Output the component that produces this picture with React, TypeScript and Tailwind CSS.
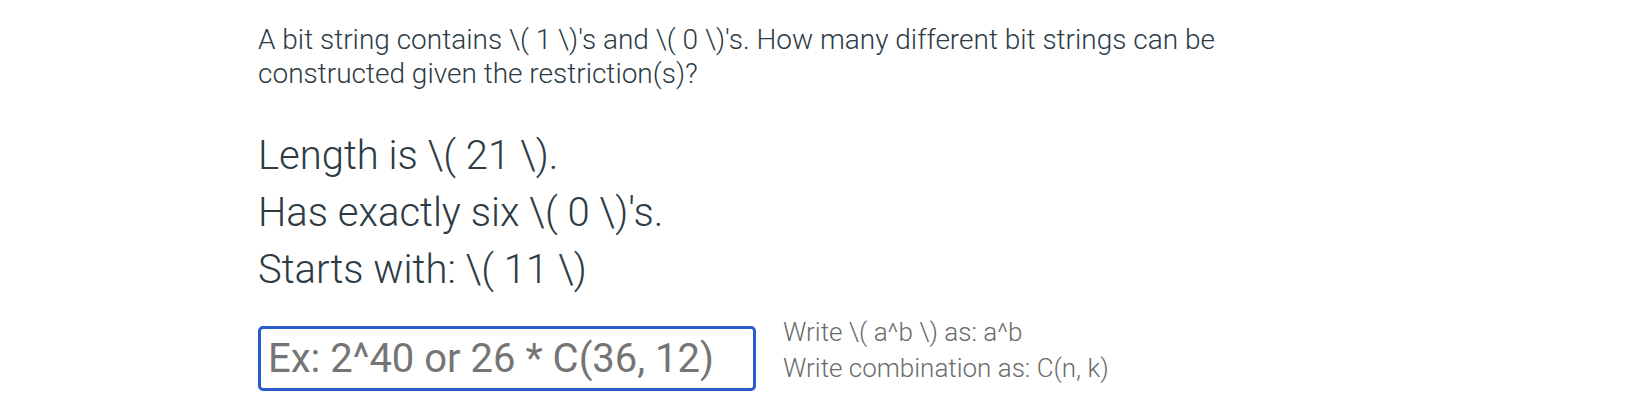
export default function App() {
  return (
    <div
      className="w-[1640px] h-[410px] bg-white text-[#2d3b45]"
      style={{ fontFamily: "Roboto, 'Liberation Sans', sans-serif" }}
    >
      <div className="pl-[258px] pt-[23px]">
        <p className="text-[28px] leading-[34px] font-light w-[960px]">
          A bit string contains \( 1 \)'s and \( 0 \)'s. How many different bit strings can be
          constructed given the restriction(s)?
        </p>
        <div className="mt-[36px] text-[40px] leading-[57px] font-light">
          <div>Length is \( 21 \).</div>
          <div>Has exactly six \( 0 \)'s.</div>
          <div>Starts with: \( 11 \)</div>
        </div>
        <div className="mt-[28px] flex items-center gap-[27px]">
          <input
            type="text"
            placeholder="Ex: 2^40 or 26 * C(36, 12)"
            className="w-[498px] h-[65px] border-[3px] border-[#2a5dc8] rounded-[5px] px-[7px] text-[40px] text-[#2d3b45] placeholder:text-[#757575] outline-none"
          />
          <div className="text-[26px] leading-[36px] text-[#6b6b6b] font-light -mt-[18px]">
            <div>Write \( a^b \) as: a^b</div>
            <div>Write combination as: C(n, k)</div>
          </div>
        </div>
      </div>
    </div>
  );
}
